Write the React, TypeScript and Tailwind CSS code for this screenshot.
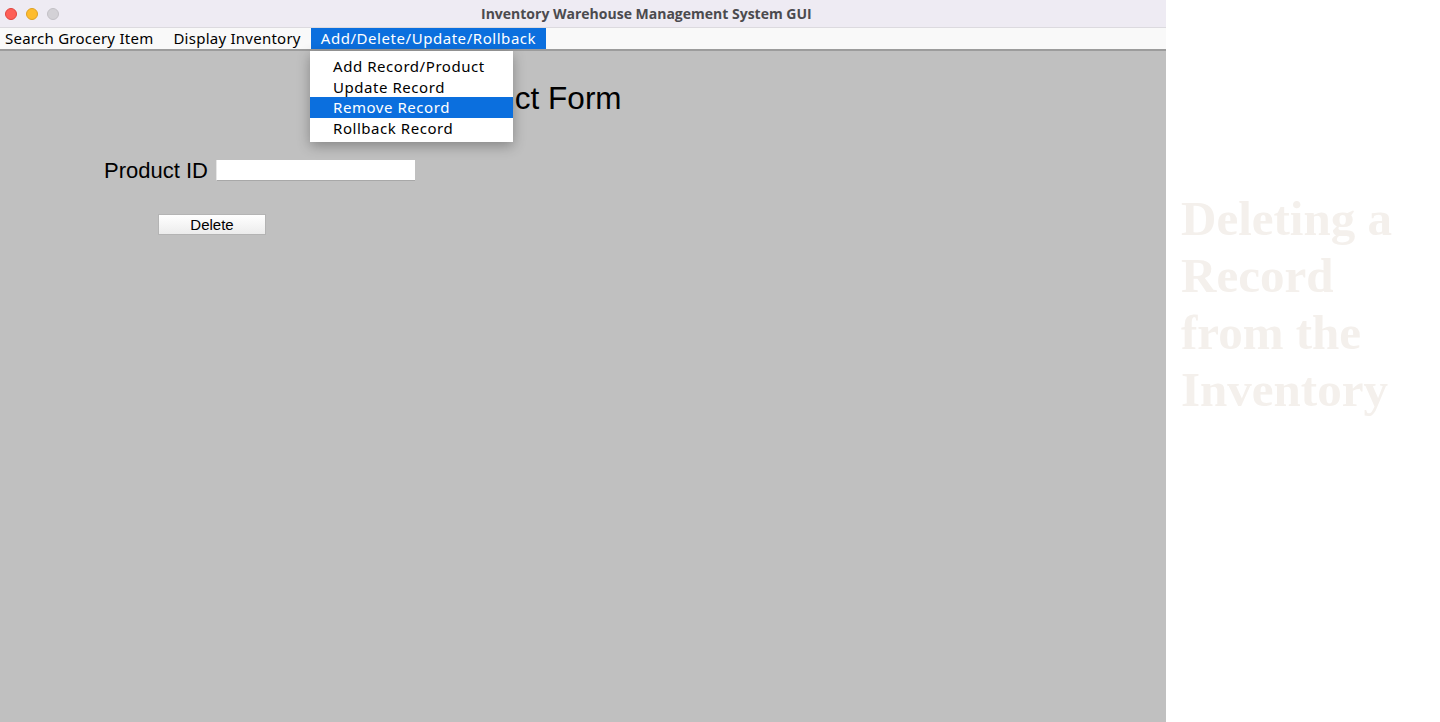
import React from "react";

const menuFont = { fontFamily: '"Noto Sans", "DejaVu Sans", sans-serif' };

const App = () => {
  const items = ["Add Record/Product", "Update Record", "Remove Record", "Rollback Record"];

  return (
    <div className="flex h-[722px] w-[1440px] bg-white overflow-hidden">
      {/* window */}
      <div className="flex flex-col w-[1166px] h-full">
        {/* title bar */}
        <div className="relative flex items-center h-[28px] bg-[#eeebf3] border-b border-[#dcdadf]">
          <div className="flex items-center gap-[9px] pl-[5px]">
            <span className="w-[12px] h-[12px] rounded-full bg-[#fe5f57] border border-[#e0443e]" />
            <span className="w-[12px] h-[12px] rounded-full bg-[#febc2e] border border-[#dea123]" />
            <span className="w-[12px] h-[12px] rounded-full bg-[#d3d1d6] border border-[#c3c1c6]" />
          </div>
          <span
            className="ml-[422px] text-[14px] font-bold text-[#4b4a4e]"
            style={{ fontFamily: '"Open Sans", "Noto Sans", sans-serif' }}
          >
            Inventory Warehouse Management System GUI
          </span>
        </div>

        {/* menu bar */}
        <div
          className="relative flex h-[23px] bg-[#f9f9f9] border-b-2 border-[#9c9c9c] text-[15px] tracking-[0.25px] text-black"
          style={menuFont}
        >
          <div className="flex items-center pl-[5px] pr-[10px]">Search Grocery Item</div>
          <div className="flex items-center px-[10px]">Display Inventory</div>
          <div className="flex items-center px-[10px] bg-[#0b6fde] text-white tracking-[0.55px]">
            Add/Delete/Update/Rollback
          </div>

          {/* dropdown */}
          <div className="absolute left-[310px] top-[23px] z-10 w-[203px] bg-white pt-[5px] pb-[4px] shadow-[0_4px_12px_rgba(0,0,0,0.3)] tracking-[0.55px]">
            {items.map((item) => (
              <div
                key={item}
                className={`h-[20.5px] leading-[20px] pl-[23px] ${
                  item === "Remove Record" ? "bg-[#0b6fde] text-white" : "text-black"
                }`}
              >
                {item}
              </div>
            ))}
          </div>
        </div>

        {/* content */}
        <div
          className="flex-1 bg-[#c0c0c0] text-black"
          style={{ fontFamily: '"Liberation Sans", Arial, sans-serif' }}
        >
          <div className="pt-[29px] pl-[331px] text-[31.5px] leading-[37px]">Delete Product Form</div>

          <div className="flex items-center mt-[37px] pl-[104px] gap-[8px]">
            <span className="text-[22px]">Product ID</span>
            <div className="w-[199px] h-[21px] bg-white border-b border-[#a8a8a8] border-l border-l-[#e6e6e6]" />
          </div>

          <div className="mt-[26px] pl-[158px]">
            <button
              type="button"
              className="w-[108px] h-[21px] text-[15px] leading-[19px] border border-[#b4b4b4] bg-gradient-to-b from-white to-[#ececec]"
            >
              Delete
            </button>
          </div>
        </div>
      </div>

      {/* caption */}
      <div className="flex-1 pl-[15px] pt-[190px]">
        <h1
          className="text-[49px] leading-[57px] font-bold text-[#f4f0ec]"
          style={{ fontFamily: '"Liberation Serif", "DejaVu Serif", serif' }}
        >
          Deleting a
          <br />
          Record
          <br />
          from the
          <br />
          Inventory
        </h1>
      </div>
    </div>
  );
};

export default App;
